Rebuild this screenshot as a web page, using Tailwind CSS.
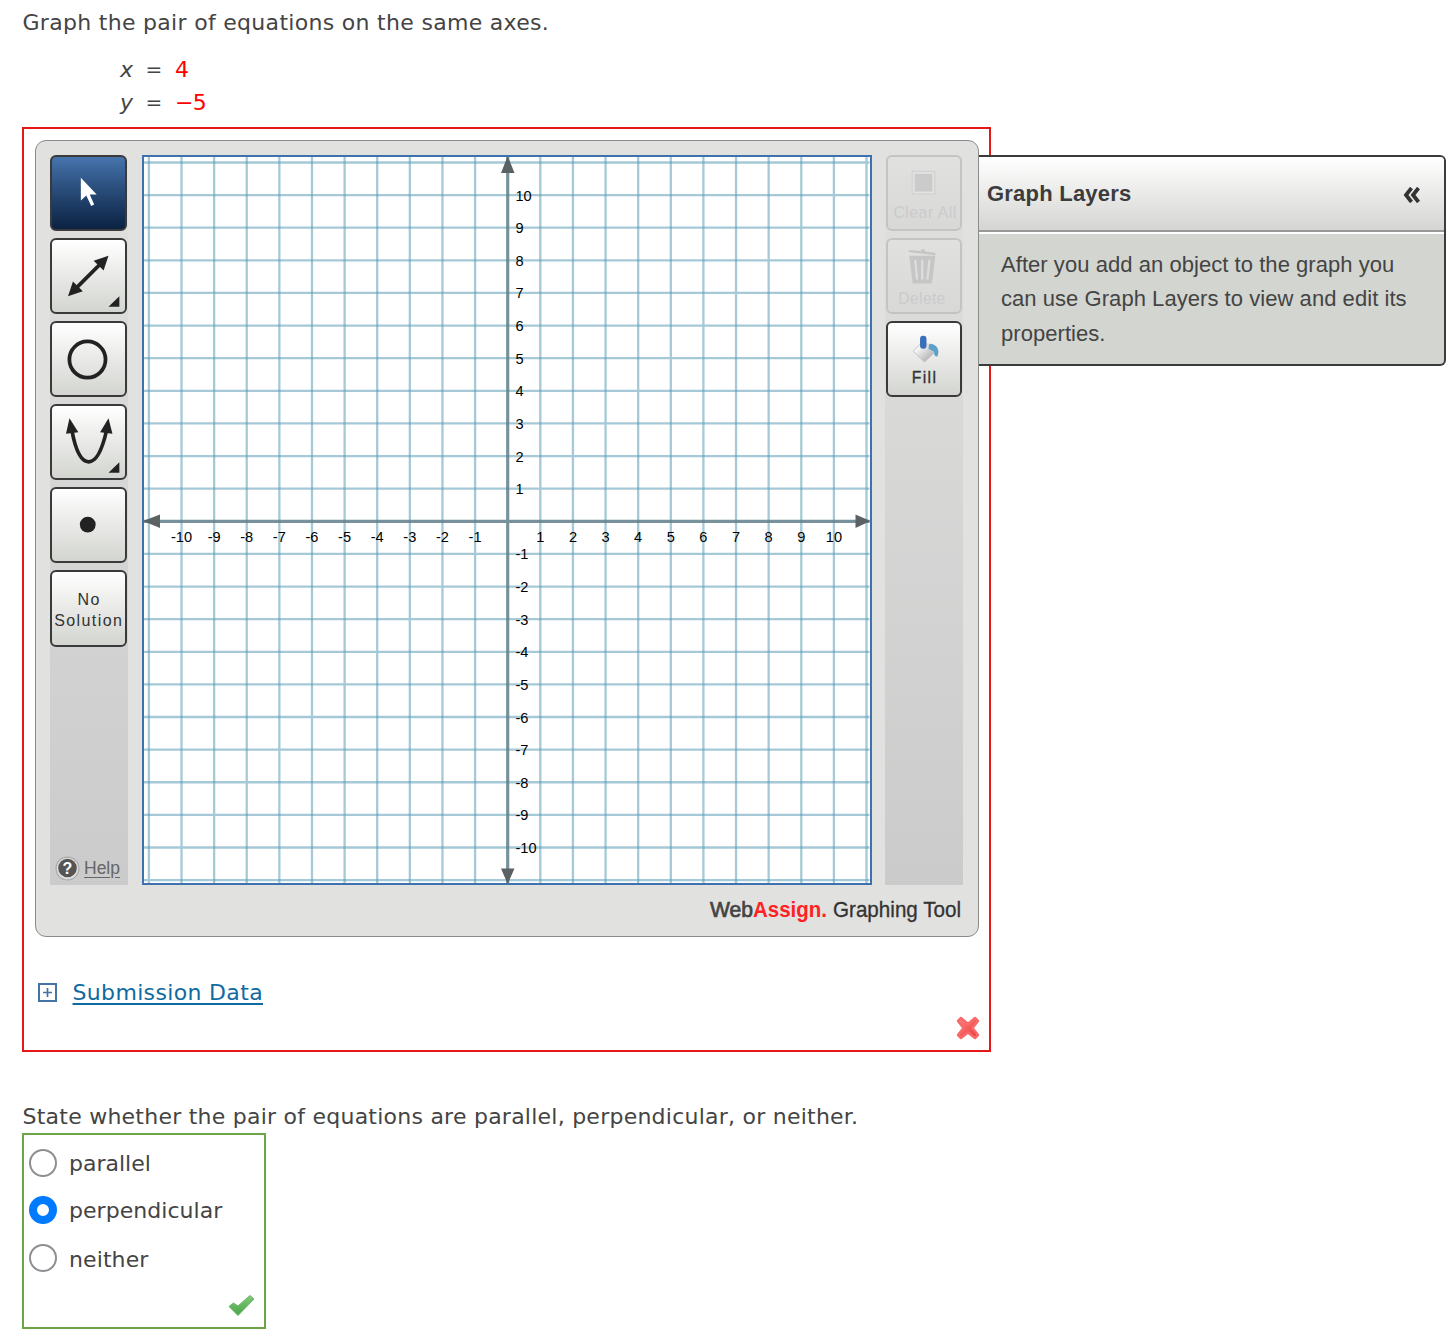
<!DOCTYPE html>
<html lang="en">
<head>
<meta charset="utf-8">
<title>Graphing question</title>
<script src="https://cdn.jsdelivr.net/npm/@tailwindcss/browser@4"></script>
</head>
<body class="bg-white">
<main class="w-[1449px] h-[1332px] overflow-hidden pl-[22px] font-['DejaVu_Sans',sans-serif] text-[22px] text-[#444]">
  <p class="h-[53px] pt-[6px] pl-[0.5px] leading-[34px] tracking-[0.3px] whitespace-nowrap">Graph the pair of equations on the same axes.</p>
  <div class="h-[74px] pl-[98px] leading-[33px]">
    <div class="flex"><span class="w-[25px] italic">x</span><span class="w-[30px] pl-[0.5px] text-[20px]">=</span><span class="text-[#f00]">4</span></div>
    <div class="flex"><span class="w-[25px] italic">y</span><span class="w-[30px] pl-[0.5px] text-[20px]">=</span><span class="text-[#f00] tracking-[-0.7px]">−5</span></div>
  </div>

  <section class="relative w-[969px] h-[925px] border-2 border-[#e51717] pl-[11px] pt-[11px]">
    <div class="w-[944px] h-[797px] rounded-[11px] border-[1.5px] border-[#8b8b8b] bg-[#e1e1df] pt-[14px] pl-[14px]">
      <div class="flex h-[730px]">
        <div class="w-[78px] h-[730px] bg-linear-to-b from-[#e0e0df] to-[#cbcbcb] flex flex-col gap-[7px]">
          <div class="w-[76.5px] h-[76.1px] shrink-0 rounded-[6px] border-2 border-[#3a3a3a] bg-linear-to-b from-[#4674ad] to-[#0b2242]">
            <svg class="size-full" viewBox="0 0 73 73"><path d="M29 21V44L34.500 39L39.500 49.500L42.500 48L38 38H45Z" fill="#fff"/></svg>
          </div>
          <div class="w-[76.5px] h-[76.1px] shrink-0 rounded-[6px] border-2 border-[#3a3a3a] bg-linear-to-b from-white to-[#d3d5d0]">
            <svg class="size-full" viewBox="0 0 73 73"><path d="M22 51L51 22" stroke="#222" stroke-width="3.800"/><path d="M57 16L42 21L52 31ZM16 57L21 42L31 52ZM57 67.500H68V57Z" fill="#222"/></svg>
          </div>
          <div class="w-[76.5px] h-[76.1px] shrink-0 rounded-[6px] border-2 border-[#3a3a3a] bg-linear-to-b from-white to-[#d3d5d0]">
            <svg class="size-full" viewBox="0 0 73 73"><circle cx="35.700" cy="37" r="18.300" fill="none" stroke="#222" stroke-width="3.800"/></svg>
          </div>
          <div class="w-[76.5px] h-[76.1px] shrink-0 rounded-[6px] border-2 border-[#3a3a3a] bg-linear-to-b from-white to-[#d3d5d0]">
            <svg class="size-full" viewBox="0 0 73 73"><path d="M20 25C24 47 30 56.500 37 56.500S50 47 55 25" fill="none" stroke="#222" stroke-width="3.700"/><path d="M17.500 12.500L14 28L26.500 26.500ZM57 12.500L48.500 26.500L61 28ZM57 67.500H68V57Z" fill="#222"/></svg>
          </div>
          <div class="w-[76.5px] h-[76.1px] shrink-0 rounded-[6px] border-2 border-[#3a3a3a] bg-linear-to-b from-white to-[#d3d5d0]">
            <svg class="size-full" viewBox="0 0 73 73"><circle cx="36" cy="36" r="8" fill="#222"/></svg>
          </div>
          <div class="w-[76.5px] h-[76.1px] shrink-0 rounded-[6px] border-2 border-[#3a3a3a] bg-linear-to-b from-white to-[#d3d5d0] flex flex-col items-center pt-[17px] font-['Liberation_Sans',sans-serif] text-[16px] leading-[21px] tracking-[1.4px] text-[#333] whitespace-nowrap">
            <span class="pl-[2px]">No</span><span class="pl-[1px]">Solution</span>
          </div>
          <div class="mt-auto flex h-[34px] items-center pl-[5px] gap-[4px] font-['Liberation_Sans',sans-serif] text-[17.5px] text-[#666]">
            <svg class="size-[25px]" viewBox="0 0 25 25"><circle cx="12.500" cy="12.500" r="12" fill="#aaa"/><circle cx="12.500" cy="12.500" r="10.800" fill="#ddd"/><circle cx="12.500" cy="12" r="9.300" fill="#555"/><text x="12.500" y="17.500" text-anchor="middle" font-family="Liberation Sans, sans-serif" font-weight="700" font-size="16" fill="#fff">?</text></svg>
            <span class="underline underline-offset-[3px]">Help</span>
          </div>
        </div>

        <svg id="plot" class="ml-[14px] w-[730px] h-[730px] shrink-0 font-['Liberation_Sans',sans-serif]" viewBox="142 155 730 730"></svg>

        <div class="ml-[13px] w-[78px] h-[730px] bg-linear-to-b from-[#e0e0df] to-[#cbcbcb] flex flex-col gap-[7px] pl-[0.5px] font-['Liberation_Sans',sans-serif] text-[16px] tracking-[1.3px]">
          <div class="w-[76px] h-[76.1px] shrink-0 rounded-[6px] border-2 border-[#c3c4c3] bg-linear-to-b from-[#e1e1e0] to-[#d8d8d7]">
            <svg class="size-full" viewBox="0 0 73 73"><rect x="24.500" y="14.500" width="23" height="23" fill="#e2e2e2" stroke="#cecece"/><rect x="27" y="17" width="18" height="18" fill="#cbcbcb"/><text x="5.500" y="61.500" fill="#cbcbcb" textLength="65">Clear All</text></svg>
          </div>
          <div class="w-[76px] h-[76.1px] shrink-0 rounded-[6px] border-2 border-[#c3c4c3] bg-linear-to-b from-[#e1e1e0] to-[#d8d8d7]">
            <svg class="size-full" viewBox="0 0 73 73"><path d="M21 10L33 11L36 8.500L38 11.500L48 13V15.500L21 12Z" fill="#c6c6c6"/><path d="M21.500 16H48L44.500 44H25Z" fill="#c6c6c6"/><path d="M27.500 20L29.500 40M34.700 20V40M42 20L40 40" stroke="#dedede" stroke-width="2.200"/><text x="10.500" y="65" fill="#cbcbcb" textLength="49">Delete</text></svg>
          </div>
          <div class="w-[76px] h-[76.1px] shrink-0 rounded-[6px] border-2 border-[#3a3a3a] bg-linear-to-b from-white to-[#d3d5d0]">
            <svg class="size-full" viewBox="0 0 73 73"><defs><linearGradient id="can" x1="0" y1="0" x2="1" y2="1"><stop offset=".3" stop-color="#f4f4f4"/><stop offset="1" stop-color="#999"/></linearGradient></defs><path d="M36 18L48.500 28.500L37 39.500L25.500 28.500Z" fill="url(#can)" stroke="#bbb" stroke-width=".8"/><path d="M42 21C50 21 53 28 50 34C48 34 46 32 47 29L41 26Z" fill="#5e9fcc"/><rect x="32.500" y="13" width="6.500" height="13" rx="3" fill="#386fb8"/><text x="24" y="61" fill="#333" stroke="#333" stroke-width=".3" textLength="26">Fill</text></svg>
          </div>
        </div>
      </div>
      <div class="flex justify-end pr-[13px] pt-[8px] font-['Liberation_Sans',sans-serif] leading-[32px]">
        <svg class="w-[256px] h-[32px]" viewBox="0 0 256 32" font-size="21.500"><text x="1" y="23.500" fill="#444" stroke="#444" stroke-width=".7" textLength="43" lengthAdjust="spacingAndGlyphs">Web</text><text x="44" y="23.500" fill="#f22" font-weight="700" textLength="74" lengthAdjust="spacingAndGlyphs">Assign.</text><text x="124" y="23.500" fill="#333" stroke="#333" stroke-width=".3" textLength="128" lengthAdjust="spacingAndGlyphs">Graphing Tool</text></svg>
      </div>
    </div>

    <div class="flex items-center mt-[38px] pl-[3px] h-[34px]">
      <svg class="w-[19px] h-[19px]" viewBox="0 0 19 19"><path d="M1 1H18V18H1Z" fill="#fff" stroke="#4672a8" stroke-width="2"/><path d="M5 9.500H14M9.500 5V14" stroke="#4672a8" stroke-width="1.700"/></svg>
      <a class="ml-[15.5px] text-[#0f6a9f] tracking-[0.34px] underline decoration-[1.5px] underline-offset-[3px]">Submission Data</a>
    </div>
    <div class="flex justify-end pr-[9px] pt-[7px]">
      <svg class="w-[24px] h-[24px]" viewBox="0 0 24 24"><defs><linearGradient id="wrong" x1="0" y1="0" x2="1" y2="1"><stop offset="0" stop-color="#ff8585"/><stop offset="1" stop-color="#ec3535"/></linearGradient></defs><path d="M5 2L12 8L19 2L22 5L16.500 12L22 19L19 22L12 16.500L5 22L2 19L7.500 12L2 5Z" fill="url(#wrong)" stroke="#f66a6a" stroke-width="2.500" stroke-linejoin="round"/></svg>
    </div>

    <aside class="absolute left-[955px] top-[26px] w-[467px] h-[211px] rounded-r-[6px] border-2 border-l-0 border-[#3b3b3b] bg-[#d3d5d0] font-['Liberation_Sans',sans-serif]">
      <div class="h-[75px] flex items-center justify-between rounded-tr-[4px] bg-linear-to-b from-white to-[#d5d6d3] border-b-2 border-[#999] pl-[8px] pr-[24px]">
        <h2 class="font-bold text-[22px] tracking-[0.22px] text-[#3c3c3c]">Graph Layers</h2>
        <svg class="w-[17px] h-[16px] mt-[3px]" viewBox="0 0 17 16"><path d="M8.500 1L3 8L8.500 15M15.500 1L10 8L15.500 15" fill="none" stroke="#333" stroke-width="3.800"/></svg>
      </div>
      <div class="h-[2px] bg-white"></div>
      <p class="pl-[22px] pt-[14px] text-[22px] leading-[34.4px] tracking-[0.05px] text-[#444] whitespace-nowrap">After you add an object to the graph you<br>can use Graph Layers to view and edit its<br>properties.</p>
    </aside>
  </section>

  <p class="mt-[48px] h-[33px] leading-[34px] pl-[0.5px] tracking-[0.24px] whitespace-nowrap">State whether the pair of equations are parallel, perpendicular, or neither.</p>
  <section class="w-[244px] h-[196px] border-2 border-[#6ba548] pl-[5px]">
    <div class="flex items-center h-[56px] gap-[12px]"><span class="size-[28px] rounded-full border-[2.5px] border-[#8e8e93]"></span><span class="pt-px">parallel</span></div>
    <div class="flex items-center h-[38px] gap-[12px]"><span class="size-[28px] rounded-full border-[8px] border-[#007aff]"></span><span class="tracking-[0.05px] pt-px">perpendicular</span></div>
    <div class="flex items-center h-[58px] gap-[12px]"><span class="size-[28px] rounded-full border-[2.5px] border-[#8e8e93]"></span><span class="tracking-[0.1px] pt-[2px]">neither</span></div>
    <div class="flex justify-end pr-[9px] pt-[7px]"><svg class="w-[27px] h-[23px]" viewBox="0 0 27 23"><defs><linearGradient id="right" x1="0" y1="0" x2="0" y2="1"><stop offset="0" stop-color="#83ca7b"/><stop offset="1" stop-color="#48a448"/></linearGradient></defs><path d="M1 12.500L5.500 9L10 12L22 1.500L26 5L10 21.500Z" fill="url(#right)" stroke="#68b765" stroke-linejoin="round"/></svg></div>
  </section>
</main>
<script>
  const originX = 507.7, originY = 521.3, step = 32.62;
  let out = '<rect x="143" y="156" width="728" height="728" fill="#fff"/><g stroke="#5b9cb6" stroke-opacity=".55" stroke-width="2.3">';
  for (let i = -11; i <= 11; i++) {
    if (i === 0) continue;
    const x = originX + i * step, y = originY - i * step;
    out += `<path d="M${x} 157V883M144 ${y}H869.500"/>`;
  }
  out += '</g><path d="M507.700 157V883M144 521.300H869.500" stroke="#5f7f8b" stroke-opacity=".85" stroke-width="3.200"/>';
  out += '<path d="M507.700 156L514.500 173H501ZM507.700 884L514.500 868.500H501ZM143 521L160 514.500V528ZM870.500 521L855.500 514.500V528Z" fill="#5b6264"/>';
  out += '<rect x="143" y="156" width="728" height="728" fill="none" stroke="#3d72ae" stroke-width="2"/><g font-size="14.6" fill="#000">';
  for (let i = -10; i <= 10; i++) {
    if (i === 0) continue;
    out += `<text x="${originX + i * step}" y="542" text-anchor="middle">${i}</text>`;
    out += `<text x="515.500" y="${originY - i * step + 5.500}">${i}</text>`;
  }
  document.getElementById('plot').innerHTML = out + '</g>';
</script>
</body>
</html>
